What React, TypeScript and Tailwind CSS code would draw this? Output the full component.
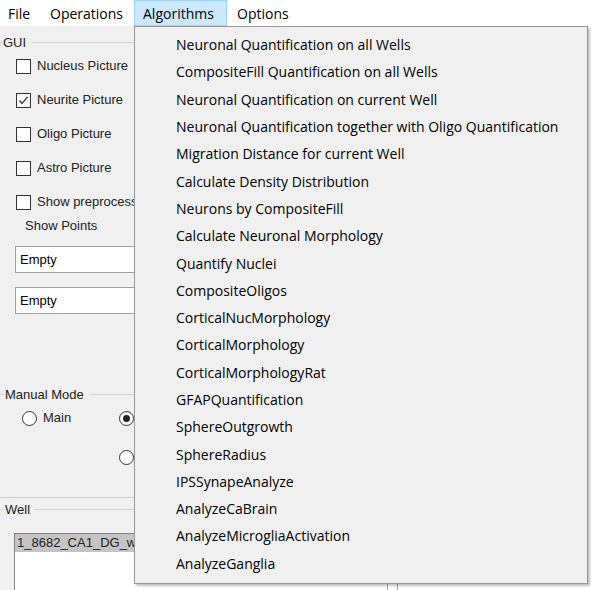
import React from "react";

const algorithms = [
  "Neuronal Quantification on all Wells",
  "CompositeFill Quantification on all Wells",
  "Neuronal Quantification on current Well",
  "Neuronal Quantification together with Oligo Quantification",
  "Migration Distance for current Well",
  "Calculate Density Distribution",
  "Neurons by CompositeFill",
  "Calculate Neuronal Morphology",
  "Quantify Nuclei",
  "CompositeOligos",
  "CorticalNucMorphology",
  "CorticalMorphology",
  "CorticalMorphologyRat",
  "GFAPQuantification",
  "SphereOutgrowth",
  "SphereRadius",
  "IPSSynapeAnalyze",
  "AnalyzeCaBrain",
  "AnalyzeMicrogliaActivation",
  "AnalyzeGanglia",
];

function GroupTitle({ label, lead }: { label: string; lead: string }) {
  return (
    <div className="flex h-[14px] items-center">
      <div className={`${lead} h-px bg-[#d5d5d5]`} />
      <span className="px-[1px] text-[13px] leading-none text-[#222]">{label}</span>
      <div className="ml-[4px] h-px flex-1 bg-[#d5d5d5]" />
    </div>
  );
}

function Checkbox({ label, checked }: { label: string; checked?: boolean }) {
  return (
    <div className="flex h-[34px] items-center pl-[16px]">
      <div className="flex h-[15px] w-[15px] shrink-0 items-center justify-center border border-[#333] bg-white">
        {checked && (
          <svg width="11" height="11" viewBox="0 0 11 11">
            <polyline points="1.5,5.5 4,8.5 9.5,2" fill="none" stroke="#444" strokeWidth="1.4" />
          </svg>
        )}
      </div>
      <span className="ml-[6px] whitespace-nowrap text-[13px] text-[#222]">{label}</span>
    </div>
  );
}

function Radio({ selected }: { selected?: boolean }) {
  return (
    <div className="flex h-[15px] w-[15px] shrink-0 items-center justify-center rounded-full border border-[#333] bg-white">
      {selected && <div className="h-[7px] w-[7px] rounded-full bg-[#222]" />}
    </div>
  );
}

export default function App() {
  return (
    <div className="relative h-[590px] w-[595px] overflow-hidden bg-white font-['Liberation_Sans',Arial,sans-serif]">
      {/* menu bar */}
      <div className="flex h-[26px] items-stretch bg-white font-['Open_Sans',sans-serif] text-[14px] text-black">
        <div className="flex w-[40px] items-center pl-[8px]">File</div>
        <div className="flex w-[94px] items-center pl-[10px]">Operations</div>
        <div className="flex w-[93px] items-center border border-[#99d1ff] bg-[#cce8ff] pl-[8px]">Algorithms</div>
        <div className="flex w-[70px] items-center pl-[10px]">Options</div>
      </div>

      <div className="flex h-[564px]">
        {/* left panel */}
        <div className="w-[134px] shrink-0 overflow-hidden bg-[#f0f0f0]">
          <div className="pt-[9px]">
            <GroupTitle label="GUI" lead="w-[2px]" />
          </div>
          <Checkbox label="Nucleus Picture" />
          <Checkbox label="Neurite Picture" checked />
          <Checkbox label="Oligo Picture" />
          <Checkbox label="Astro Picture" />
          <Checkbox label="Show preprocessed" />
          <div className="pl-[25px] text-[13px] leading-[14px] text-[#222]">Show Points</div>
          <div className="ml-[15px] mt-[13px] flex h-[27px] w-[140px] items-center border border-[#a0a0a0] bg-white pl-[4px] text-[13px] text-black">
            Empty
          </div>
          <div className="ml-[15px] mt-[14px] flex h-[27px] w-[140px] items-center border border-[#a0a0a0] bg-white pl-[4px] text-[13px] text-black">
            Empty
          </div>
          <div className="mt-[73px]">
            <GroupTitle label="Manual Mode" lead="w-[4px]" />
          </div>
          <div className="mt-[9px] flex h-[16px] items-center pl-[22px]">
            <Radio />
            <span className="ml-[6px] w-[76px] text-[13px] text-[#222]">Main</span>
            <Radio selected />
          </div>
          <div className="mt-[23px] flex h-[16px] items-center pl-[119px]">
            <Radio />
          </div>
          <div className="mt-[32px] h-px bg-[#d0d0d0]" />
          <div className="mt-[4px]">
            <GroupTitle label="Well" lead="w-[4px]" />
          </div>
          <div className="ml-[14px] mt-[17px] h-[80px] w-[140px] border border-[#828282] bg-white">
            <div className="flex h-[18px] items-center whitespace-nowrap bg-[#c4c4c4] pl-[2px] text-[13px] text-[#222]">
              1_8682_CA1_DG_w1
            </div>
          </div>
        </div>

        {/* content beneath the menu */}
        <div className="flex flex-1 flex-col justify-end bg-white">
          <div className="ml-[253px] h-[6px] w-[11px] border-x border-[#a0a0a0]" />
        </div>
      </div>

      {/* Algorithms dropdown */}
      <div className="absolute left-[134px] top-[26px] h-[558px] w-[454px] border border-[#979797] bg-[#f0f0f0] pt-[4px] font-['Open_Sans',sans-serif] text-[14px] text-black shadow-[2px_2px_2px_rgba(0,0,0,0.25)]">
        {algorithms.map((a) => (
          <div key={a} className="flex h-[27.3px] items-center whitespace-nowrap pl-[41px]">
            {a}
          </div>
        ))}
      </div>
    </div>
  );
}
